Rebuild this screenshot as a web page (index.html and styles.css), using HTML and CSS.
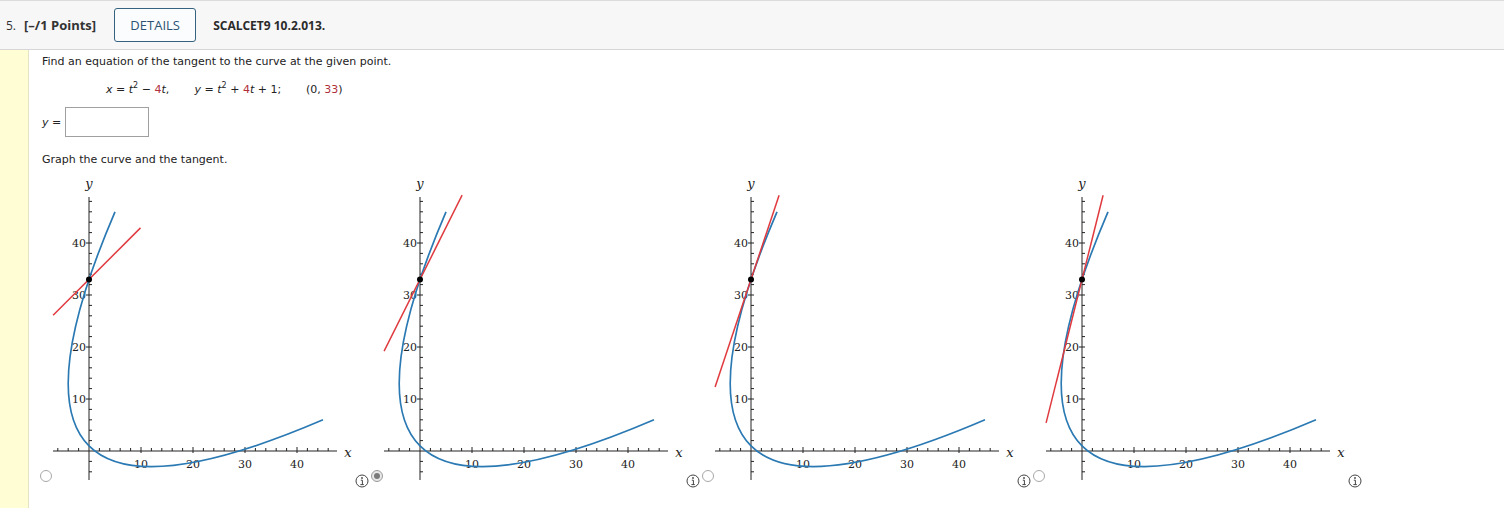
FILE: index.html
```html
<!DOCTYPE html>
<html>
<head>
<meta charset="utf-8">
<link rel="stylesheet" href="styles.css">
</head>
<body>
<svg class="defs" aria-hidden="true">
  <defs>
    <g id="axes">
      <g class="axis">
        <path d="M0 276H284M36 22V305"/>
        <path d="M4.8 273v3M15.2 273v3M25.6 273v3M46.4 273v3M56.8 273v3M67.2 273v3M77.6 273v3M98.4 273v3M108.8 273v3M119.2 273v3M129.6 273v3M150.4 273v3M160.8 273v3M171.2 273v3M181.6 273v3M202.4 273v3M212.8 273v3M223.2 273v3M233.6 273v3M254.4 273v3M264.8 273v3M275.2 273v3"/>
        <path d="M88 272v6M140 272v6M192 272v6M244 272v6"/>
        <path d="M36 296.8h3M36 286.4h3M36 265.6h3M36 255.2h3M36 244.8h3M36 234.4h3M36 213.6h3M36 203.2h3M36 192.8h3M36 182.4h3M36 161.6h3M36 151.2h3M36 140.8h3M36 130.4h3M36 109.6h3M36 99.2h3M36 88.8h3M36 78.4h3M36 57.6h3M36 47.2h3M36 36.8h3M36 26.4h3"/>
        <path d="M33 224h6M33 172h6M33 120h6M33 68h6"/>
      </g>
      <g class="lbl">
        <text x="33" y="72" text-anchor="end">40</text>
        <text x="33" y="124" text-anchor="end">30</text>
        <text x="33" y="176" text-anchor="end">20</text>
        <text x="33" y="228" text-anchor="end">10</text>
        <text x="88" y="293" text-anchor="middle">10</text>
        <text x="140" y="293" text-anchor="middle">20</text>
        <text x="192" y="293" text-anchor="middle">30</text>
        <text x="244" y="293" text-anchor="middle">40</text>
      </g>
      <text class="var" x="36" y="13" text-anchor="middle">y</text>
      <text class="var" x="295" y="282" text-anchor="middle">x</text>
      <path class="curve" d="M270 244.8Q-94 400.8 62 36.8"/>
    </g>
    <g id="info">
      <circle cx="7" cy="7" r="6" fill="none" stroke="#444" stroke-width="1"/>
      <circle cx="7" cy="4" r="0.9" fill="#444"/>
      <path d="M5.8 6.2h1.6v4.3M5.4 10.6h3.4" fill="none" stroke="#444" stroke-width="1"/>
    </g>
  </defs>
</svg>

<header class="topbar">
  <span class="qnum">5.</span>
  <span class="points">[&ndash;/1 Points]</span>
  <button class="details">DETAILS</button>
  <span class="code">SCALCET9 10.2.013.</span>
</header>

<main class="main">
  <div class="stripe"></div>
  <div class="content">
    <p class="prompt">Find an equation of the tangent to the curve at the given point.</p>
    <p class="eq">
      <span class="eq-a"><i>x</i> = <i>t</i><sup>2</sup> &minus; <span class="red">4</span><i>t</i>,</span>
      <span class="eq-b"><i>y</i> = <i>t</i><sup>2</sup> + <span class="red">4</span><i>t</i> + 1;</span>
      <span class="eq-c">(0, <span class="red">33</span>)</span>
    </p>
    <div class="answer">
      <span class="ylabel"><i>y</i> =</span>
      <span class="box"></span>
    </div>
    <p class="prompt graph-prompt">Graph the curve and the tangent.</p>

    <div class="options">
      <div class="option">
        <span class="radio"></span>
        <svg class="plot" width="302" height="310">
          <use href="#axes"/>
          <path class="tan" d="M0.1 140.3L87.5 52.9"/>
          <circle class="pt" cx="36" cy="104.4" r="3"/>
        </svg>
        <svg class="info" viewBox="0 0 14 14"><use href="#info"/></svg>
      </div>
      <div class="option">
        <span class="radio checked"></span>
        <svg class="plot" width="302" height="310">
          <use href="#axes"/>
          <path class="tan" d="M0.1 176.2L78.1 20.2"/>
          <circle class="pt" cx="36" cy="104.4" r="3"/>
        </svg>
        <svg class="info" viewBox="0 0 14 14"><use href="#info"/></svg>
      </div>
      <div class="option">
        <span class="radio"></span>
        <svg class="plot" width="302" height="310">
          <use href="#axes"/>
          <path class="tan" d="M0.1 212L64.1 20.2"/>
          <circle class="pt" cx="36" cy="104.4" r="3"/>
        </svg>
        <svg class="info" viewBox="0 0 14 14"><use href="#info"/></svg>
      </div>
      <div class="option">
        <span class="radio"></span>
        <svg class="plot" width="302" height="310">
          <use href="#axes"/>
          <path class="tan" d="M0.1 247.9L57.1 20.2"/>
          <circle class="pt" cx="36" cy="104.4" r="3"/>
        </svg>
        <svg class="info" viewBox="0 0 14 14"><use href="#info"/></svg>
      </div>
    </div>
  </div>
</main>
</body>
</html>
```

FILE: styles.css
```css
html, body {
  margin: 0;
  padding: 0;
  background: #fff;
  overflow: hidden;
}
.defs {
  display: block;
  width: 0;
  height: 0;
  overflow: hidden;
}
.topbar {
  box-sizing: border-box;
  height: 50px;
  display: flex;
  align-items: center;
  background: #f7f7f7;
  border-top: 1px solid #dcdcdc;
  border-bottom: 1px solid #d6d6d6;
  padding-left: 6px;
  font-family: "Open Sans", "Liberation Sans", sans-serif;
  color: #333;
}
.qnum {
  font-size: 12px;
  margin-right: 8px;
}
.points {
  font-size: 13px;
  font-weight: 700;
  margin-right: 18px;
}
.details {
  box-sizing: border-box;
  width: 82px;
  height: 34px;
  background: #fafcfd;
  border: 1px solid #36627f;
  border-radius: 3px;
  color: #2c5374;
  font-family: "Open Sans", "Liberation Sans", sans-serif;
  font-size: 13px;
  padding: 0;
  margin-right: 17px;
}
.code {
  font-size: 12px;
  font-weight: 700;
  color: #2b2b2b;
}
.main {
  display: flex;
  min-height: 458px;
}
.stripe {
  width: 28px;
  flex: none;
  background: #fffdd3;
  border-right: 1px solid #e4e2c4;
}
.content {
  flex: 1;
  padding-left: 13px;
  font-family: "DejaVu Sans", Verdana, sans-serif;
  font-size: 11px;
  color: #222;
}
.prompt {
  margin: 4px 0 0;
  line-height: 16px;
}
.eq {
  margin: 12px 0 0;
  line-height: 16px;
  padding-left: 64px;
  white-space: nowrap;
}
.eq sup {
  font-size: 8px;
  line-height: 0;
}
.eq-a {
  display: inline-block;
  width: 85px;
}
.eq-b {
  display: inline-block;
  width: 108px;
}
.red {
  color: #b0303a;
}
.answer {
  margin-top: 9px;
  display: flex;
  align-items: center;
}
.ylabel {
  width: 23px;
}
.box {
  box-sizing: border-box;
  width: 84px;
  height: 30px;
  border: 1px solid #a0a0a0;
  background: #fff;
}
.graph-prompt {
  margin-top: 15px;
}
.options {
  display: flex;
  margin-top: 7px;
  margin-left: -2px;
}
.option {
  display: flex;
  align-items: flex-start;
  width: 331px;
  flex: none;
}
.radio {
  box-sizing: border-box;
  width: 12px;
  height: 12px;
  border: 1px solid #a8a8a8;
  border-radius: 50%;
  background: #fff;
  margin-top: 295px;
  flex: none;
  display: flex;
  align-items: center;
  justify-content: center;
}
.radio.checked {
  border-color: #9a9a9a;
  background: #e8e8e8;
}
.radio.checked::after {
  content: "";
  width: 6px;
  height: 6px;
  border-radius: 50%;
  background: #7a7a7a;
}
.plot {
  flex: none;
  overflow: visible;
  margin-left: 1px;
}
.info {
  width: 14px;
  height: 14px;
  margin-top: 299px;
  flex: none;
}
.axis path {
  fill: none;
  stroke: #222;
  stroke-width: 1;
}
.lbl text {
  font-family: "DejaVu Serif", serif;
  font-size: 11px;
  fill: #222;
}
.var {
  font-family: "DejaVu Serif", serif;
  font-style: italic;
  font-size: 13px;
  fill: #222;
}
.curve {
  fill: none;
  stroke: #2a79b3;
  stroke-width: 1.7;
}
.tan {
  fill: none;
  stroke: #e0393e;
  stroke-width: 1.5;
}
.pt {
  fill: #000;
}
```
